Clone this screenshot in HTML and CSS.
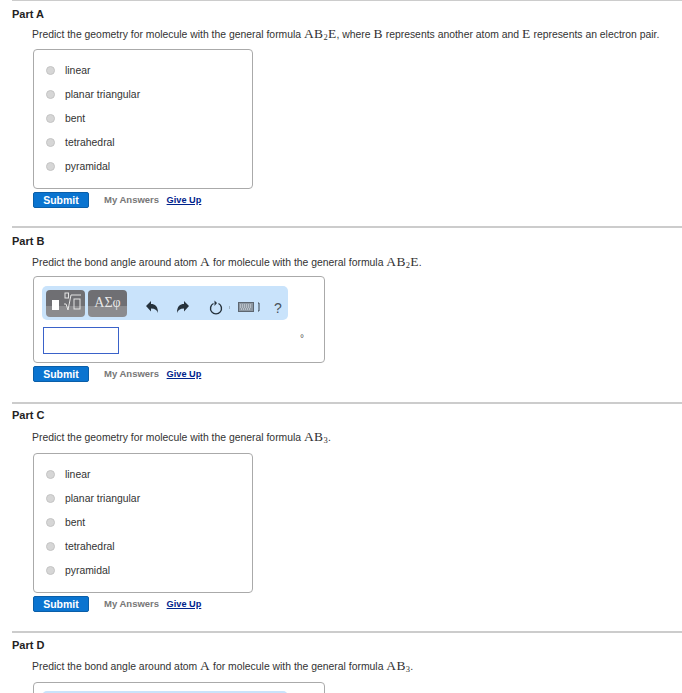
FILE: index.html
```html
<!DOCTYPE html>
<html lang="en">
<head>
<meta charset="utf-8">
<title>Molecular geometry</title>
<link rel="stylesheet" href="styles.css">
</head>
<body>
<main class="page">
  <section class="part part-a">
    <h2>Part A</h2>
    <p class="prompt">Predict the geometry for molecule with the general formula <span class="m">AB<sub>2</sub>E</span>, where <span class="m">B</span> represents another atom and <span class="m">E</span> represents an electron pair.</p>
    <ul class="choices">
      <li><span class="radio"></span>linear</li>
      <li><span class="radio"></span>planar triangular</li>
      <li><span class="radio"></span>bent</li>
      <li><span class="radio"></span>tetrahedral</li>
      <li><span class="radio"></span>pyramidal</li>
    </ul>
    <div class="actions"><button class="submit">Submit</button><span class="mine">My Answers</span><a class="giveup" href="#">Give Up</a></div>
  </section>
  <section class="part part-b">
    <h2>Part B</h2>
    <p class="prompt">Predict the bond angle around atom <span class="m">A</span> for molecule with the general formula <span class="m">AB<sub>2</sub>E</span>.</p>
    <div class="answer">
      <div class="toolbar">
        <span class="tool tool-root">
          <svg width="38" height="26" viewBox="0 0 38 26"><rect x="5" y="10" width="7" height="10" fill="#fff"/><path d="M17 14l2 0 2 6 3-15h10" fill="none" stroke="#e4e4e4" stroke-width="1"/><rect x="18" y="3" width="3.500" height="5" fill="none" stroke="#e4e4e4"/><rect x="27" y="9" width="6" height="10" fill="none" stroke="#e4e4e4"/></svg>
        </span>
        <span class="tool tool-greek">ΑΣφ</span>
        <svg class="ic ic-undo" width="14" height="14" viewBox="0 0 14 14"><path d="M1 6l5-5v3c4 0 7 2 7 9-1-3-3-4.500-7-4.500v3z" fill="#26323c"/></svg>
        <svg class="ic ic-redo" width="14" height="14" viewBox="0 0 14 14"><path d="M13 6l-5-5v3c-4 0-7 2-7 9 1-3 3-4.500 7-4.500v3z" fill="#26323c"/></svg>
        <svg class="ic ic-reset" width="14" height="15" viewBox="0 0 14 15"><path d="M4.500 3.500a5.500 5.500 0 1 0 5 0" fill="none" stroke="#26323c" stroke-width="1.400"/><path d="M5.500 0.500v5.500l2.500-3z" fill="#26323c"/></svg>
        <span class="sep"></span>
        <svg class="ic ic-keys" width="24" height="10" viewBox="0 0 24 10"><rect x=".5" y=".5" width="15" height="9" fill="#8e98a2" stroke="#5d6670"/><path d="M2 3h12M2 5h12M3 7h10" stroke="#dfe5ea" stroke-dasharray="1 1"/><path d="M20 1h1v8h-1" fill="none" stroke="#39434c"/></svg>
        <span class="help">?</span>
      </div>
      <div class="field-row"><span class="field"></span><span class="unit">°</span></div>
    </div>
    <div class="actions"><button class="submit">Submit</button><span class="mine">My Answers</span><a class="giveup" href="#">Give Up</a></div>
  </section>
  <section class="part part-c">
    <h2>Part C</h2>
    <p class="prompt">Predict the geometry for molecule with the general formula <span class="m">AB<sub>3</sub></span>.</p>
    <ul class="choices">
      <li><span class="radio"></span>linear</li>
      <li><span class="radio"></span>planar triangular</li>
      <li><span class="radio"></span>bent</li>
      <li><span class="radio"></span>tetrahedral</li>
      <li><span class="radio"></span>pyramidal</li>
    </ul>
    <div class="actions"><button class="submit">Submit</button><span class="mine">My Answers</span><a class="giveup" href="#">Give Up</a></div>
  </section>
  <section class="part part-d">
    <h2>Part D</h2>
    <p class="prompt">Predict the bond angle around atom <span class="m">A</span> for molecule with the general formula <span class="m">AB<sub>3</sub></span>.</p>
    <div class="answer">
      <div class="toolbar"></div>
    </div>
  </section>
</main>
</body>
</html>
```
FILE: styles.css
```css
html, body { margin: 0; padding: 0; background: #fff; }
.page {
  height: 693px;
  overflow: hidden;
  font-family: "Liberation Sans", Arial, sans-serif;
  font-size: 10.4px;
  color: #333;
}
.part { margin-left: 12px; border-top: 2px solid #ccc; box-sizing: border-box; }
.part-a { height: 227px; margin-top: -1px; }
.part-b { height: 176px; }
.part-c { height: 229px; }
h2 { margin: 0; padding-top: 7px; font-size: 11px; line-height: 13px; font-weight: bold; color: #222; }
.part-c h2 { padding-top: 5px; }
.part-d h2 { padding-top: 6px; }
.prompt { margin: 6px 0 0 20px; line-height: 14px; white-space: nowrap; }
.part-b .prompt, .part-d .prompt { margin-top: 7px; }
.part-c .prompt { margin-top: 8px; }
.m { font-family: "Liberation Serif", serif; font-size: 13.5px; letter-spacing: 0.3px; }
.m sub { font-size: 8.5px; line-height: 0; vertical-align: -2px; }
.choices {
  list-style: none;
  box-sizing: border-box;
  width: 220px;
  height: 140px;
  margin: 7px 0 0 21px;
  padding: 8px 0 0;
  border: 1px solid #aaa;
  border-radius: 4px;
}
.part-c .choices { margin-top: 8px; }
.choices li { display: flex; align-items: center; height: 24px; }
.radio {
  box-sizing: border-box;
  width: 9px;
  height: 9px;
  margin: 0 10px 0 12px;
  border: 1px solid #c4c4c4;
  border-radius: 50%;
  background: #d6d6d6;
}
.actions { display: flex; align-items: center; height: 17px; margin: 2px 0 0 21px; }
.submit {
  box-sizing: border-box;
  width: 56px;
  height: 16px;
  padding: 0;
  border: 1px solid #0a5ea8;
  border-radius: 2px;
  background: #0a74d0;
  color: #fff;
  font: bold 10.5px "Liberation Sans", Arial, sans-serif;
}
.mine { margin-left: 15px; font-size: 9.5px; font-weight: bold; color: #777; }
.giveup { margin-left: 7.5px; font-size: 9.2px; font-weight: bold; color: #00238c; }
.answer {
  box-sizing: border-box;
  width: 292px;
  height: 87px;
  margin: 6px 0 0 21px;
  padding: 9px 9px 8px 8px;
  border: 1px solid #aaa;
  border-radius: 4px;
}
.part-d .answer { margin-top: 8px; padding-top: 8px; }
.toolbar {
  display: flex;
  align-items: center;
  box-sizing: border-box;
  width: 246px;
  height: 34px;
  padding: 0 4px;
  border-radius: 5px;
  background: #c9e3fb;
}
.tool {
  display: flex;
  align-items: center;
  justify-content: center;
  box-sizing: border-box;
  height: 27px;
  border-radius: 4px;
  background: linear-gradient(#6f6f73 0, #6f6f73 60%, #8b8b8e 60%, #8b8b8e 100%);
  color: #e8e8e8;
}
.tool-root { width: 39px; margin-right: 3px; }
.tool-greek { width: 39px; font: 14px "Liberation Serif", serif; }
.ic { flex: none; margin-top: 8px; }
.ic-undo { margin-left: 18px; }
.ic-redo { margin-left: 17px; }
.ic-reset { margin-left: 19px; }
.sep { width: 1px; height: 3px; margin: 8px 0 0 6px; background: #9fb4c6; }
.ic-keys { margin-left: 8px; }
.help { margin: 10px 0 0 12px; font-size: 14px; color: #4a5259; }
.field-row { display: flex; align-items: center; justify-content: space-between; margin: 7px 0 0 1px; }
.field { box-sizing: border-box; width: 76px; height: 27px; border: 1px solid #3a62c9; }
.unit { margin: 0 11px 4px 0; font-size: 10px; color: #555; }
```
